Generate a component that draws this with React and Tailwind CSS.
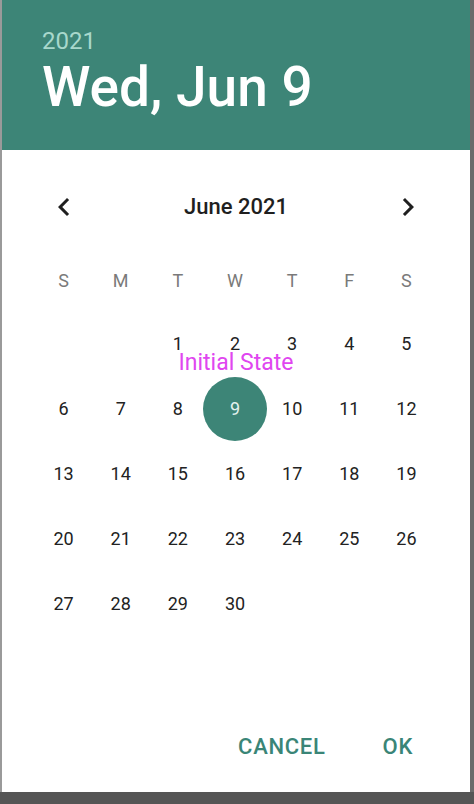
import React from 'react';

const WEEK = ['S', 'M', 'T', 'W', 'T', 'F', 'S'];

// June 2021 starts on a Tuesday
const buildWeeks = () => {
    const cells = [null, null];
    for (let d = 1; d <= 30; d++) cells.push(d);
    const weeks = [];
    for (let i = 0; i < cells.length; i += 7) weeks.push(cells.slice(i, i + 7));
    return weeks;
};

const ChevronLeft = () => (
    <svg width="36" height="36" viewBox="0 0 24 24" fill="#1f1f1f">
        <path d="M15.41 7.41L14 6l-6 6 6 6 1.41-1.41L10.83 12z" />
    </svg>
);

const ChevronRight = () => (
    <svg width="36" height="36" viewBox="0 0 24 24" fill="#1f1f1f">
        <path d="M10 6L8.59 7.41 13.17 12l-4.58 4.59L10 18l6-6z" />
    </svg>
);

const App = () => {
    const selected = 9;
    const weeks = buildWeeks();

    return (
        <div className="w-[474px] h-[804px] bg-[#555555] flex flex-col overflow-hidden" style={{ fontFamily: 'Roboto, "Noto Sans", sans-serif' }}>
            <div className="h-[792px] flex">
                <div className="w-[2px] bg-[#9a9a9a]" />
                <div className="w-[468px] bg-white flex flex-col">
                    {/* header */}
                    <div className="h-[150px] bg-[#3d8577] pl-[40px] pt-[29px] shrink-0">
                        <div className="text-[24px] leading-none text-[#a8d8cc]">2021</div>
                        <div className="mt-[7px] text-[55px] leading-none font-medium text-white">Wed, Jun 9</div>
                    </div>

                    {/* month nav */}
                    <div className="ml-[33px] w-[402px] mt-[37px] h-[40px] grid grid-cols-7 items-center">
                        <div className="flex justify-center">
                            <ChevronLeft />
                        </div>
                        <div className="col-span-5 text-center text-[22px] leading-none font-medium text-[#1f1f1f]">June 2021</div>
                        <div className="flex justify-center">
                            <ChevronRight />
                        </div>
                    </div>

                    {/* weekday headers */}
                    <div className="ml-[33px] w-[400px] mt-[34px] h-[40px] grid grid-cols-7 items-center">
                        {WEEK.map((w, i) => (
                            <div key={i} className="text-center text-[18px] leading-none text-[#7a7a7a]">{w}</div>
                        ))}
                    </div>

                    {/* days */}
                    <div className="relative ml-[33px] w-[400px] mt-[10px]">
                        {weeks.map((week, wi) => (
                            <div key={wi} className="h-[65px] grid grid-cols-7">
                                {week.map((d, di) => (
                                    <div key={di} className="flex items-center justify-center">
                                        {d === selected ? (
                                            <div className="w-[64px] h-[64px] shrink-0 rounded-full bg-[#3d8577] flex items-center justify-center text-[18px] text-[#e3f2ee]">
                                                {d}
                                            </div>
                                        ) : (
                                            <span className="text-[18px] text-[#222222]">{d}</span>
                                        )}
                                    </div>
                                ))}
                            </div>
                        ))}
                        <div className="absolute left-[2px] right-0 top-[40px] text-center text-[23px] leading-none text-[#e046f0]">
                            Initial State
                        </div>
                    </div>

                    {/* actions */}
                    <div className="mt-auto h-[90px] flex items-center justify-end gap-[57px] pr-[57px]">
                        <button className="text-[22px] leading-none font-medium tracking-[0.7px] text-[#3a8577]">CANCEL</button>
                        <button className="text-[22px] leading-none font-medium tracking-[0.7px] text-[#3a8577]">OK</button>
                    </div>
                </div>
                <div className="flex-1 bg-[#6b6b6b]" />
            </div>
        </div>
    );
};

export default App;
